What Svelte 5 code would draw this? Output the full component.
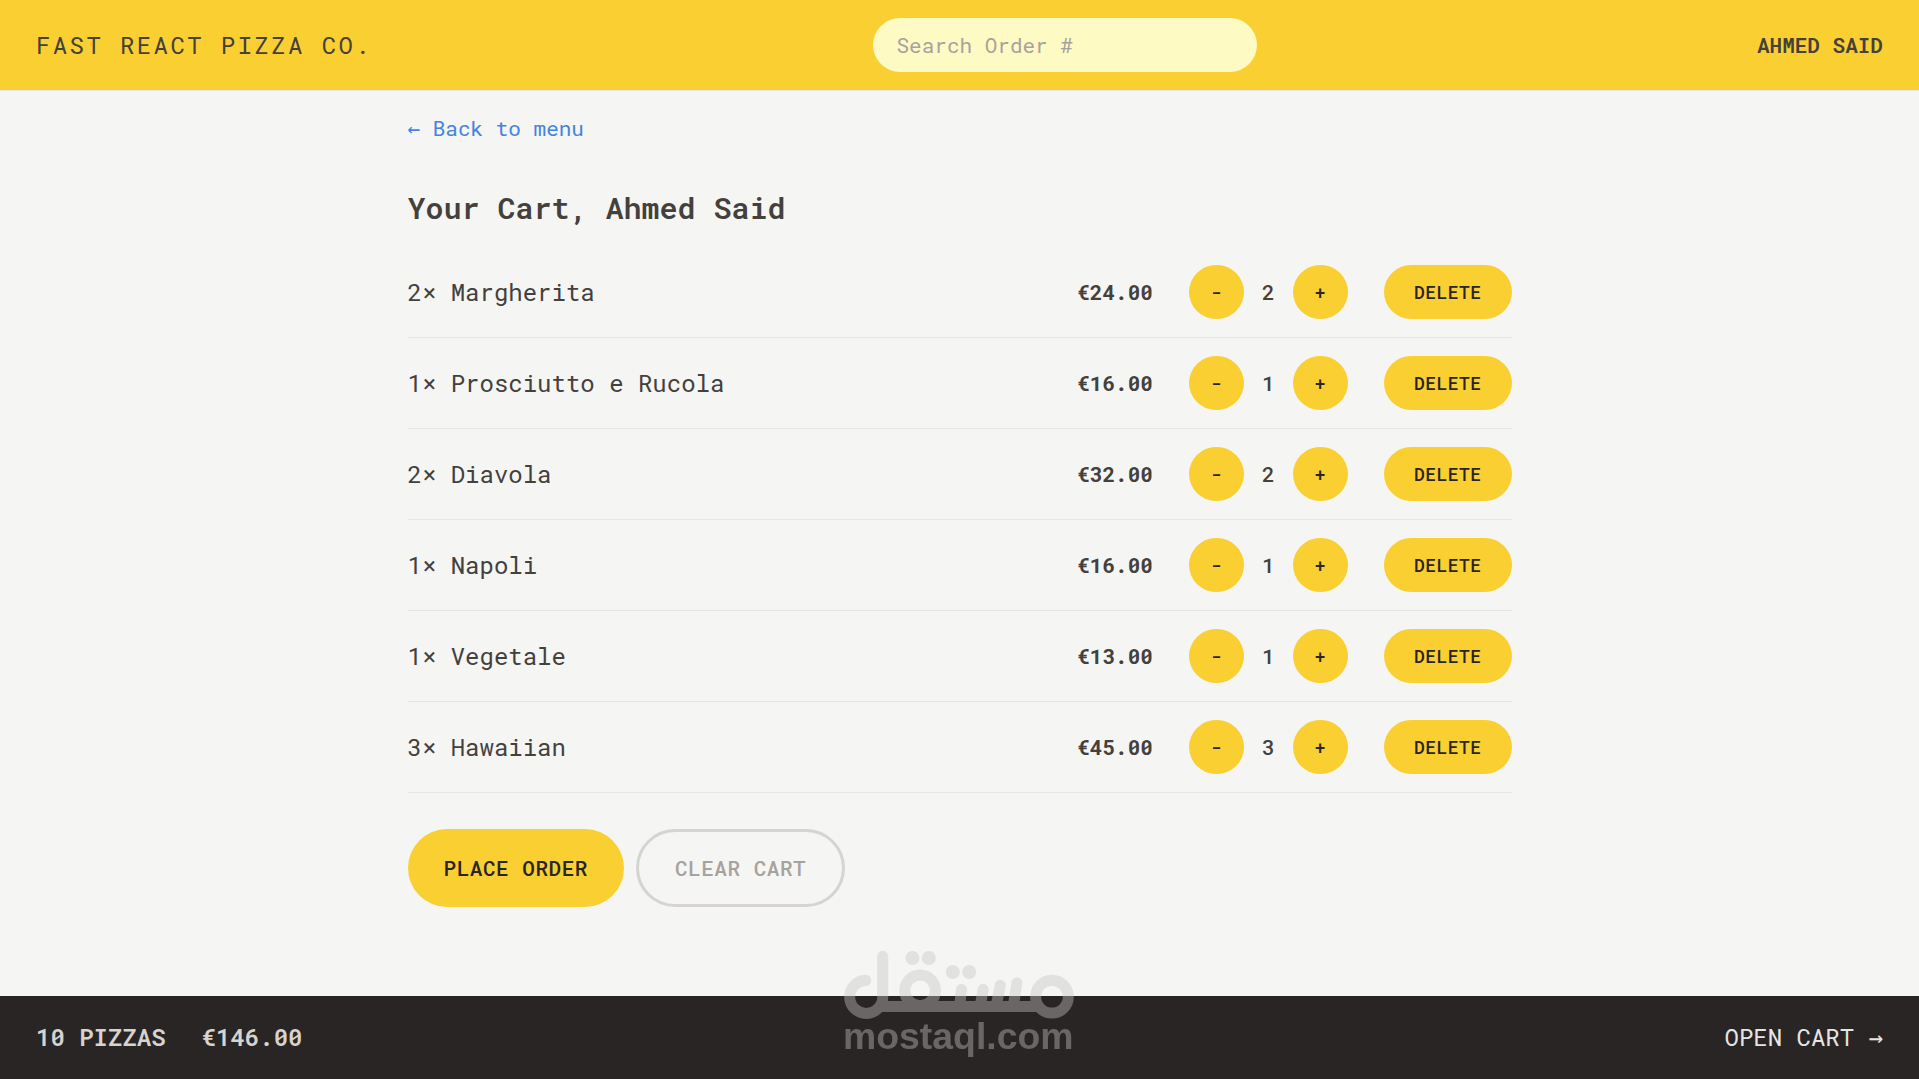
<script>
  let username = 'Ahmed Said';
  let items = $state([
    { name: 'Margherita', quantity: 2, unitPrice: 12 },
    { name: 'Prosciutto e Rucola', quantity: 1, unitPrice: 16 },
    { name: 'Diavola', quantity: 2, unitPrice: 16 },
    { name: 'Napoli', quantity: 1, unitPrice: 16 },
    { name: 'Vegetale', quantity: 1, unitPrice: 13 },
    { name: 'Hawaiian', quantity: 3, unitPrice: 15 }
  ]);
  let totalCount = $derived(items.reduce((sum, i) => sum + i.quantity, 0));
  let totalPrice = $derived(items.reduce((sum, i) => sum + i.quantity * i.unitPrice, 0));

  const euro = (value) => `€${value.toFixed(2)}`;

  function remove(item) {
    items = items.filter((i) => i !== item);
  }
  function decrease(item) {
    if (item.quantity === 1) remove(item);
    else item.quantity -= 1;
  }
</script>

<div class="layout">
  <header class="topbar">
    <a class="brand" href="#home">Fast React Pizza Co.</a>
    <form onsubmit={(e) => e.preventDefault()}>
      <input class="search" type="text" placeholder="Search Order #" aria-label="Search order number" />
    </form>
    <p class="user">{username}</p>
  </header>

  <div class="scroll">
    <main class="page">
      <div class="back"><a href="#menu">← Back to menu</a></div>
      <h2>Your Cart, {username}</h2>

      <ul class="items">
        {#each items as item (item.name)}
          <li>
            <p class="name">{item.quantity}× {item.name}</p>
            <div class="controls">
              <p class="price">{euro(item.quantity * item.unitPrice)}</p>
              <div class="stepper">
                <button class="btn round" aria-label="Decrease {item.name}" onclick={() => decrease(item)}>-</button>
                <span class="count">{item.quantity}</span>
                <button class="btn round" aria-label="Increase {item.name}" onclick={() => (item.quantity += 1)}>+</button>
              </div>
              <button class="btn small" onclick={() => remove(item)}>Delete</button>
            </div>
          </li>
        {/each}
      </ul>

      <div class="actions">
        <button class="btn primary">Place order</button>
        <button class="btn secondary" onclick={() => (items = [])}>Clear cart</button>
      </div>
    </main>
  </div>

  <footer class="summary">
    <p class="totals">
      <span>{totalCount} pizzas</span>
      <span>{euro(totalPrice)}</span>
    </p>
    <a href="#cart">Open cart →</a>
  </footer>
</div>

<svg class="watermark" viewBox="73 60 695 325" role="img" aria-label="mostaql.com">
  <g fill="none" stroke="currentColor" stroke-width="33" stroke-linecap="round">
    <path d="M138 151A49.500 49.500 0 1 0 189 200V79" />
    <circle cx="301" cy="181" r="46" />
    <path stroke-linecap="butt" d="M176 229.500H662" />
    <path d="M425 178L420 222M490 178L482 222M541 166L530 222M591 159L581 222" />
    <circle cx="696" cy="200" r="49" />
  </g>
  <g fill="currentColor">
    <circle cx="278" cy="84" r="21" />
    <circle cx="327" cy="84" r="21" />
    <circle cx="399" cy="126" r="21" />
    <circle cx="448" cy="126" r="21" />
    <text x="70" y="356">mostaql.com</text>
  </g>
</svg>

<style>
  :global(body) {
    margin: 0;
    background: #f5f5f4;
  }
  .layout,
  .layout :global(*) {
    box-sizing: border-box;
  }
  .layout {
    display: grid;
    grid-template-rows: auto 1fr auto;
    height: 100vh;
    color: #44403c;
    font: 400 24px/36px 'Roboto Mono', 'DejaVu Sans Mono', 'Liberation Mono', monospace;
  }
  p,
  h2,
  ul {
    margin: 0;
    padding: 0;
  }
  a {
    color: inherit;
    text-decoration: none;
  }
  .topbar {
    display: flex;
    align-items: center;
    justify-content: space-between;
    padding: 18px 36px;
    background: #facf32;
    border-bottom: 1px solid #e7e5e4;
    text-transform: uppercase;
  }
  .brand {
    letter-spacing: 0.1em;
  }
  .search {
    display: block;
    width: 384px;
    padding: 12px 24px;
    border: 0;
    border-radius: 999px;
    background: #fefac4;
    color: inherit;
    font: inherit;
    font-size: 21px;
    line-height: 30px;
  }
  .search::placeholder {
    color: #a8a29e;
    opacity: 1;
  }
  .user {
    font-size: 21px;
    line-height: 30px;
    font-weight: 600;
  }
  .scroll {
    overflow: auto;
  }
  .page {
    max-width: 1152px;
    margin: 0 auto;
    padding: 18px 24px;
  }
  .back a {
    font-size: 21px;
    line-height: 30px;
    color: #4384df;
  }
  h2 {
    margin-top: 42px;
    font-size: 30px;
    line-height: 42px;
    font-weight: 600;
  }
  .items {
    margin-top: 18px;
    list-style: none;
  }
  li {
    display: flex;
    align-items: center;
    justify-content: space-between;
    padding: 18px 0;
    border-bottom: 1px solid #e7e5e4;
  }
  .controls {
    display: flex;
    align-items: center;
    gap: 36px;
  }
  .price {
    font-size: 21px;
    font-weight: 700;
  }
  .stepper {
    display: flex;
    align-items: center;
    gap: 18px;
  }
  .count {
    font-size: 21px;
    font-weight: 500;
  }
  .btn {
    border: 0;
    border-radius: 999px;
    background: #facf32;
    color: #292524;
    font: inherit;
    font-size: 21px;
    line-height: 30px;
    font-weight: 500;
    letter-spacing: 0.025em;
    text-transform: uppercase;
    cursor: pointer;
  }
  .round,
  .small {
    padding: 15px 30px;
    font-size: 18px;
    line-height: 24px;
  }
  .round {
    padding: 15px 22px;
  }
  .actions {
    display: flex;
    gap: 12px;
    margin-top: 36px;
  }
  .primary {
    padding: 24px 36px;
  }
  .secondary {
    padding: 21px 36px;
    border: 3px solid #d6d3d1;
    background: transparent;
    color: #a8a29e;
  }
  .summary {
    display: flex;
    align-items: center;
    justify-content: space-between;
    padding: 24px 36px;
    background: #292524;
    color: #e7e5e4;
    line-height: 35px;
    text-transform: uppercase;
  }
  .totals {
    display: flex;
    gap: 36px;
    color: #d6d3d1;
    font-weight: 600;
  }
  .watermark {
    position: fixed;
    left: 50%;
    bottom: 21px;
    width: 232px;
    transform: translateX(-50%);
    color: #c4c4c2;
    opacity: 0.41;
    pointer-events: none;
  }
  .watermark text {
    font: 700 112px 'Liberation Sans', Arial, sans-serif;
  }
</style>
